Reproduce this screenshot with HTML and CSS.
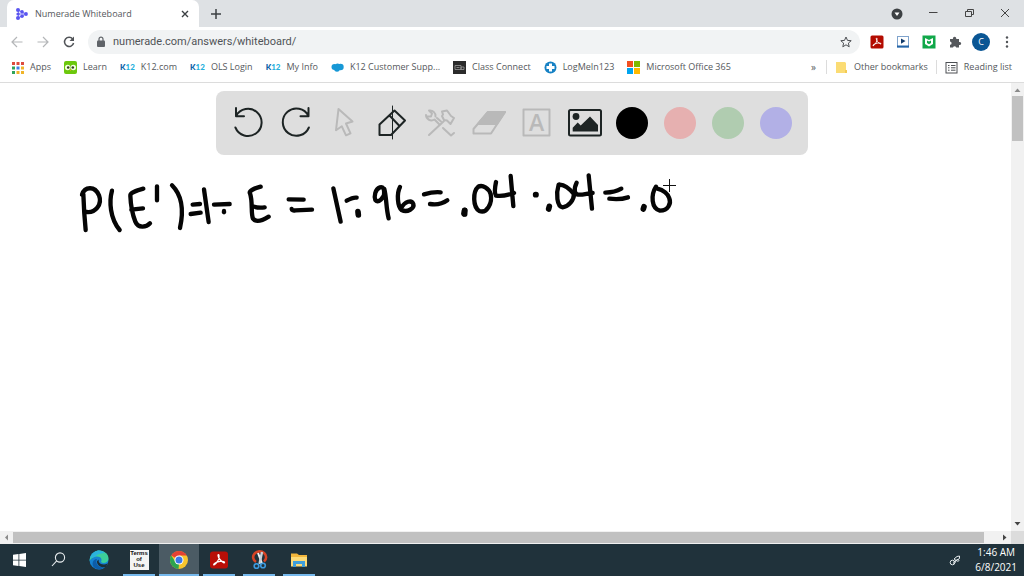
FILE: index.html
```html
<!DOCTYPE html>
<html lang="en">
<head>
<meta charset="utf-8">
<title>Numerade Whiteboard</title>
<link rel="stylesheet" href="styles.css">
</head>
<body>
<header class="browser">
  <div class="tabstrip">
    <div class="tab">
      <svg class="tab-icon" viewBox="0 0 12 12" fill="#5a55f0"><path d="M2 2L10 6L2 10L3 6ZM2 6H10" stroke="#7d78f4" fill="none"/><circle cx="2" cy="2" r="2"/><circle cx="2" cy="6" r="1.600"/><circle cx="2" cy="10" r="2"/><circle cx="6" cy="3.800" r="1.800"/><circle cx="6" cy="8.200" r="1.800"/><circle cx="10" cy="6" r="1.900"/></svg>
      <span class="tab-title">Numerade Whiteboard</span>
      <button class="plain" aria-label="Close tab"><svg class="i12" viewBox="0 0 12 12"><path d="M3 3L9 9M9 3L3 9" stroke="#3c4043" stroke-width="1.400"/></svg></button>
    </div>
    <button class="plain new-tab" aria-label="New tab"><svg class="i12" viewBox="0 0 12 12"><path d="M6 1V11M1 6H11" stroke="#3c4043" stroke-width="1.500"/></svg></button>
    <div class="window-controls">
      <button class="plain" aria-label="Tab search"><svg class="i12" viewBox="0 0 12 12"><circle cx="6" cy="6" r="5.500" fill="#3c4043"/><path d="M3.500 4.500H8.500L6 8Z" fill="#fff"/></svg></button>
      <button class="plain" aria-label="Minimize"><svg class="i12" viewBox="0 0 12 12"><path d="M2 4.500H10.500" stroke="#444"/></svg></button>
      <button class="plain" aria-label="Restore"><svg class="i12" viewBox="0 0 12 12" fill="none" stroke="#444"><path d="M2.500 3.500H8.500V8.500H2.500ZM4.500 3V1.500H10.500V6.500H9"/></svg></button>
      <button class="plain" aria-label="Close"><svg class="i12" viewBox="0 0 12 12"><path d="M2 1L10 9M10 1L2 9" stroke="#444"/></svg></button>
    </div>
  </div>

  <div class="toolbar">
    <div class="nav">
      <button class="plain" aria-label="Back"><svg class="i12" viewBox="0 0 12 12" fill="none" stroke="#b4b6b8" stroke-width="1.200"><path d="M11.500 6H1M6 1L1 6L6 11"/></svg></button>
      <button class="plain" aria-label="Forward"><svg class="i12" viewBox="0 0 12 12" fill="none" stroke="#b4b6b8" stroke-width="1.200"><path d="M.5 6H11M6 1L11 6L6 11"/></svg></button>
      <button class="plain" aria-label="Reload"><svg class="i12" viewBox="0 0 12 12" fill="none" stroke="#505357" stroke-width="1.500"><path d="M9.700 3A4.600 4.600 0 1 0 10.600 7"/><path d="M11 .5V5H6.500Z" fill="#505357" stroke="none"/></svg></button>
    </div>
    <div class="omnibox">
      <svg class="lock" viewBox="0 0 10 12"><rect x="1" y="4.500" width="8" height="6.500" rx="1" fill="#5f6368"/><path d="M3 5V3.200A2 2 0 0 1 7 3.200V5" fill="none" stroke="#5f6368" stroke-width="1.200"/></svg>
      <input class="url" type="text" aria-label="Address" value="numerade.com/answers/whiteboard/">
      <button class="plain" aria-label="Bookmark this page"><svg class="i12" viewBox="0 0 12 12"><path d="M6 1L7.500 4.400L11.200 4.700L8.400 7.100L9.200 10.800L6 8.800L2.800 10.800L3.600 7.100L.8 4.700L4.500 4.400Z" fill="none" stroke="#4c4f53"/></svg></button>
    </div>
    <div class="extensions">
      <button class="plain" aria-label="Adobe Acrobat"><svg class="i14" viewBox="0 0 14 14"><rect x=".5" y=".5" width="13" height="13" rx="1.500" fill="#b30b00"/><path d="M3 11C5 10 7.500 6 7 3.500C6.500 2 5.500 4 7.500 6.500S11.500 9.500 11 8.500C10 7.500 6 8 3.500 9.500Z" fill="none" stroke="#fff" stroke-width=".9"/></svg></button>
      <button class="plain" aria-label="Video player"><svg class="i14" viewBox="0 0 14 14"><rect x="1.500" y="1.500" width="11" height="10.500" fill="#fff" stroke="#7fa3cc"/><path d="M1 11.500H13" stroke="#2465a8" stroke-width="2"/><path d="M5 3.500L9.500 6L5 8.700Z" fill="#123b6b"/></svg></button>
      <button class="plain" aria-label="McAfee"><svg class="i14" viewBox="0 0 14 14"><rect x=".5" y=".5" width="13" height="13" fill="#11a84a"/><path d="M3 3L7 5L11 3V9L7 11.500L3 9Z" fill="#fff"/><path d="M5 5.500L7 6.600L9 5.500V8L7 9.300L5 8Z" fill="#11a84a"/></svg></button>
      <button class="plain" aria-label="Extensions"><svg class="i14" viewBox="0 0 14 14" fill="#55585c"><path d="M2 4H5A1.700 1.700 0 1 1 8.200 4H11V7A1.600 1.600 0 1 1 11 10V12.500H8.200A1.700 1.700 0 0 0 5 12.500H2V9.800A1.600 1.600 0 0 0 2 6.600Z"/></svg></button>
      <button class="avatar" aria-label="Profile">C</button>
      <button class="plain" aria-label="Menu"><svg class="i14" viewBox="0 0 14 14" fill="#505357"><circle cx="7" cy="2.500" r="1.200"/><circle cx="7" cy="7" r="1.200"/><circle cx="7" cy="11.500" r="1.200"/></svg></button>
    </div>
  </div>

  <nav class="bookmarks" aria-label="Bookmarks">
    <a class="bookmark" href="#"><svg class="i13" viewBox="0 0 13 13"><path d="M1 1h3v3H1zM5.500 1h3v3h-3zM10 1h3v3h-3z" fill="#dd4b3e"/><path d="M1 5.500h3v3H1z" fill="#2fa35a"/><path d="M5.500 5.500h3v3h-3z" fill="#3f7ee8"/><path d="M10 5.500h3v3h-3z" fill="#f0b429"/><path d="M1 10h3v3H1z" fill="#2fa35a"/><path d="M5.500 10h3v3h-3zM10 10h3v3h-3z" fill="#f0b429"/></svg><span>Apps</span></a>
    <a class="bookmark" href="#"><svg class="i13" viewBox="0 0 13 13"><rect width="13" height="13" rx="2" fill="#6cc80c"/><circle cx="3.700" cy="6.500" r="2.700" fill="#f4ffe0"/><circle cx="9.300" cy="6.500" r="2.700" fill="#f4ffe0"/><circle cx="4.200" cy="6.500" r="1.300" fill="#34431c"/><circle cx="8.800" cy="6.500" r="1.300" fill="#34431c"/><path d="M5.500 8.500H7.500L6.500 10Z" fill="#f6a821"/></svg><span>Learn</span></a>
    <a class="bookmark" href="#"><b class="k12">K<i>12</i></b><span>K12.com</span></a>
    <a class="bookmark" href="#"><b class="k12">K<i>12</i></b><span>OLS Login</span></a>
    <a class="bookmark" href="#"><b class="k12">K<i>12</i></b><span>My Info</span></a>
    <a class="bookmark" href="#"><svg class="i13" viewBox="0 0 13 13" fill="#1798d6"><circle cx="3.500" cy="6" r="3"/><circle cx="6.500" cy="5" r="2.500"/><circle cx="9.500" cy="6" r="3.200"/><circle cx="6" cy="8" r="2.800"/></svg><span>K12 Customer Supp...</span></a>
    <a class="bookmark" href="#"><svg class="i13" viewBox="0 0 13 13"><rect width="13" height="13" fill="#2b2b2b"/><path d="M2 4.500H8V8.500H2ZM8 6H11V8.500H8ZM3.500 6.500H6.500" fill="none" stroke="#999" stroke-width=".8"/></svg><span>Class Connect</span></a>
    <a class="bookmark" href="#"><svg class="i13" viewBox="0 0 13 13"><circle cx="6.500" cy="6.500" r="6" fill="#1681c4"/><path d="M5 2.500H8V5H10.500V8H8V10.500H5V8H2.500V5H5Z" fill="#fff"/></svg><span>LogMeIn123</span></a>
    <a class="bookmark" href="#"><svg class="i13" viewBox="0 0 13 13"><path d="M0 0h6v6H0z" fill="#f25022"/><path d="M7 0h6v6H7z" fill="#7fba00"/><path d="M0 7h6v6H0z" fill="#00a4ef"/><path d="M7 7h6v6H7z" fill="#ffb900"/></svg><span>Microsoft Office 365</span></a>
    <div class="bookmarks-end">
      <button class="plain more" aria-label="More bookmarks">»</button>
      <a class="bookmark divided" href="#"><svg class="i13" viewBox="0 0 13 13"><path d="M1 1H10L11 2V12H1Z" fill="#fbdc74"/><path d="M10 9H12V12H10Z" fill="#f3cb55"/></svg><span>Other bookmarks</span></a>
      <a class="bookmark divided" href="#"><svg class="i13" viewBox="0 0 13 13" fill="none" stroke="#4c4f53"><rect x="1" y="1.500" width="11" height="10.500"/><path d="M3 4.500h1.500M3 6.800h1.500M3 9.200h1.500M6 4.500h4.500M6 6.800h4.500M6 9.200h4.500"/></svg><span>Reading list</span></a>
    </div>
  </nav>
</header>

<main class="viewport">
  <section class="board" aria-label="Whiteboard">
    <svg class="ink" viewBox="0 83 1024 180" role="img" aria-label="P(E')=1- E = 1-.96=.04·.04=.0">
      <g class="stroke">
        <g transform="translate(70 170) scale(.3333)">
          <path d="M40 72Q42 130 47 180M36 74C44 50 74 46 87 76C98 105 75 129 50 126"/>
          <path d="M126 62C117 95 120 145 149 180"/>
          <path d="M220 56C200 62 180 68 181 77C182 100 188 135 196 155C205 177 230 171 240 160M184 119L219 115"/>
          <path d="M261 49L261 91M306 46C335 75 342 120 330 174"/>
          <path d="M368 104L390 102M362 132L392 128M402 58L416 156M432 104L479 102"/>
          <path d="M462 123v4"/>
          <path d="M572 50C557 54 535 62 540 70C549 95 542 130 549 146C560 160 580 150 596 140M549 109Q565 115 584 112"/>
        </g>
        <g transform="translate(270 165) scale(.3333)">
          <path d="M56 103L101 104M65 132Q66 138 76 136L126 134M190 70L212 170M230 107Q250 96 260 98"/>
          <path d="M264 140L265 150" class="dot"/>
          <path d="M342 90C344 68 338 65 330 67C315 72 312 95 316 105C325 115 342 100 345 80M343 72C350 100 348 130 356 160"/>
          <path d="M390 66C380 85 382 124 395 135C412 144 434 130 430 117C425 104 405 108 393 130"/>
          <path d="M462 88Q490 80 512 82M480 117Q510 122 532 106"/>
          <path d="M584 137L584 147" class="dot"/>
        </g>
        <g transform="translate(450 160) scale(.3333)">
          <path d="M44 151L42 161M257 104h1M298 139L296 147M582 140L580 147" class="dot"/>
          <path d="M85 80C68 95 68 140 88 153C110 162 128 130 122 102C116 84 98 74 85 80"/>
          <path d="M138 66C133 90 133 100 138 107C155 110 175 105 192 99M182 48L190 138"/>
          <path d="M326 74C318 100 320 140 338 142C356 140 372 120 372 102C360 88 345 75 330 74"/>
          <path d="M380 68C370 90 374 102 384 104C400 105 415 99 428 99M416 46L426 146"/>
          <path d="M466 98Q495 97 514 86M478 116Q510 120 534 112"/>
          <path d="M618 80C602 105 604 145 630 152C655 152 664 130 658 115C655 102 640 90 622 86"/>
        </g>
      </g>
      <path class="cursor" d="M663 185.500H676M669.500 179V192"/>
    </svg>

    <div class="tools" role="toolbar" aria-label="Drawing tools">
      <button class="tool" aria-label="Undo"><svg viewBox="0 0 48 48"><path d="M12 9V17.300H20M12 17A13.600 13.600 0 1 1 11.400 28.500"/></svg></button>
      <button class="tool" aria-label="Redo"><svg viewBox="0 0 48 48"><path d="M36.500 9V17.300H28.500M36.500 17A13.600 13.600 0 1 0 36.900 28.500"/></svg></button>
      <button class="tool faded" aria-label="Select"><svg viewBox="0 0 48 48"><path d="M18.500 10L32.500 22.500L26 24.500L30.500 34.300L26 36.300L21.800 27.300L16 31.300Z"/></svg></button>
      <button class="tool" aria-label="Pen"><svg viewBox="0 0 48 48"><path d="M26.500 11.500L37 21.500L23 36H11.500V25.500ZM21.500 16.500L31.500 27"/><path d="M24.500 7V40" stroke-width="1"/></svg></button>
      <button class="tool faded" aria-label="Tools"><svg viewBox="0 0 48 48"><path d="M10 16A5.500 5.500 0 0 0 18.500 20.500L23 25M27 29L35 36.500L38 34M19.500 17.500A5.500 5.500 0 0 0 13 11.500L16 14.500L15 17.500L11.500 17.500M21 19L25 22.500"/><path d="M13 36L28 22M27 15.500L26 12.500L31 11.500L35 17L38 19L34.500 25L31 21.500L28 21L26 17Z"/></svg></button>
      <button class="tool faded" aria-label="Eraser"><svg viewBox="0 0 48 48"><path d="M24 13H41L27 34.500H9.500V30Z"/><path d="M24 13H41L33 25H14Z" fill="#b9b9b9"/></svg></button>
      <button class="tool faded" aria-label="Text"><svg viewBox="0 0 48 48"><rect x="11.500" y="10.500" width="26" height="26"/><text class="letter" x="24.500" y="32" text-anchor="middle">A</text></svg></button>
      <button class="tool" aria-label="Image"><svg viewBox="0 0 48 48"><rect x="9" y="11" width="32" height="25.500" rx="1.500"/><g fill="#1d2424" stroke="none"><circle cx="16" cy="17.500" r="3.400"/><path d="M12.700 32.500V28.700L17.700 23.500L20.700 26.500L30 17.500L38 26V32.500Z"/></g></svg></button>
      <button class="tool" aria-label="Black"><span class="swatch black"></span></button>
      <button class="tool" aria-label="Red"><span class="swatch red"></span></button>
      <button class="tool" aria-label="Green"><span class="swatch green"></span></button>
      <button class="tool" aria-label="Blue"><span class="swatch blue"></span></button>
    </div>
  </section>
  <div class="scroll-y" aria-hidden="true">
    <svg class="arrow" viewBox="0 0 13 13"><path d="M3.500 9L6.500 5.500L9.500 9Z" fill="#8a8a8a"/></svg>
    <div class="thumb-y"></div>
    <svg class="arrow last" viewBox="0 0 13 13"><path d="M3.500 4L6.500 7.500L9.500 4Z" fill="#444"/></svg>
  </div>
  <div class="scroll-x" aria-hidden="true">
    <svg class="arrow" viewBox="0 0 13 13"><path d="M8 3.500L5 6.500L8 9.500Z" fill="#8a8a8a"/></svg>
    <div class="thumb-x"></div>
    <svg class="arrow last" viewBox="0 0 13 13"><path d="M5 3.500L8.500 6.500L5 9.500Z" fill="#444"/></svg>
  </div>
  <div class="corner"></div>
</main>

<footer class="taskbar">
  <button class="task start" aria-label="Start"><svg class="i20" viewBox="0 0 20 20" fill="#fff"><path d="M3 4.800L8.500 4V9.700H3ZM9.300 3.900L16 3V9.700H9.300ZM3 10.500H8.500V16L3 15.200ZM9.300 10.500H16V17L9.300 16.100Z"/></svg></button>
  <button class="task" aria-label="Search"><svg class="i20" viewBox="0 0 20 20" fill="none" stroke="#e8ecee" stroke-width="1.100"><circle cx="11" cy="7.500" r="4.600"/><path d="M7.700 10.800L3 16"/></svg></button>
  <button class="task" aria-label="Edge"><svg class="i20" viewBox="0 0 20 20"><circle cx="10" cy="10" r="9.500" fill="#1683d2"/><path d="M1 8C3 2 8 .5 10 .5C16 .5 20 5 19.500 9C19 13 14 14 12 12C13.500 9.500 12 6.500 8 6.500C5 6.500 2 8 .5 11Z" fill="#3ccf9a"/><path d="M1 8C3 2 8 .5 10 .5C13 .5 15 2 16 3C12 3 8 4 6 7Z" fill="#2bb3dd"/><path d="M8 9C6 13 9 18 15 17.500C12 20.500 6 19.500 4 16C2.500 12 5 9 8 9Z" fill="#0d5ca8"/><path d="M10 9.500C9 11 10 14.500 15 14.500C17 14.500 18 13.500 19 13L17 17C12 18.500 7.500 15 8 11Z" fill="#1c2d37"/></svg></button>
  <button class="task open" aria-label="Terms of Use"><span class="terms">Terms<br>of<br>Use</span></button>
  <button class="task open active" aria-label="Chrome"><svg class="i20" viewBox="0 0 20 20"><circle cx="10" cy="10" r="9" fill="#f7c52d"/><path d="M17.800 5.500H10V10L2.200 5.500A9 9 0 0 1 17.800 5.500Z" fill="#e44134"/><path d="M2.200 5.500L6.500 12L10 14L9.500 19A9 9 0 0 1 2.200 5.500Z" fill="#2da44f"/><circle cx="10" cy="10" r="4.500" fill="#fff"/><circle cx="10" cy="10" r="3.500" fill="#3b78e7"/></svg></button>
  <button class="task open" aria-label="Acrobat"><svg class="i20" viewBox="0 0 20 20"><rect x="1" y="1.500" width="18" height="17" rx="3" fill="#b90f08"/><path d="M5 15C8 13.500 11 8 10 5C9 3.500 8 6 11 9.500S16 13.500 15.500 12C14.500 10.500 8 11.500 5.500 13.500C4.500 14.500 4.500 15 5 15Z" fill="none" stroke="#fff" stroke-width="1.200"/></svg></button>
  <button class="task open" aria-label="Snipping Tool"><svg class="i20" viewBox="0 0 20 20" fill="none"><path d="M7 12A6.500 5.800 0 1 1 15 11.500" stroke="#d64425" stroke-width="2.600"/><path d="M9 3L13 13.500" stroke="#f2f4f5" stroke-width="2"/><path d="M13 2L10.500 14" stroke="#c9d2d8" stroke-width="2.400"/><circle cx="7.500" cy="16" r="2.300" stroke="#3c9be0" stroke-width="1.600"/><circle cx="14" cy="15.500" r="2.300" stroke="#3c9be0" stroke-width="1.600"/></svg></button>
  <button class="task open" aria-label="File Explorer"><svg class="i20" viewBox="0 0 20 20"><path d="M2 3.500H8L10 5H18V16H2Z" fill="#f2b63c"/><path d="M2 7H18V16.500H2Z" fill="#fddb78"/><path d="M4 11H16V17H13V14H7V17H4Z" fill="#3f9fdc"/></svg></button>
  <div class="tray">
    <svg class="i12" viewBox="0 0 12 12" fill="none" stroke="#e4eaec"><circle cx="3.500" cy="8.500" r="2.300"/><path d="M4 10C7 10 6 5 9 5.500C11 6 9.500 8 8 7L5 5L8 2.500L10.500 2V4.500L4 8.500"/></svg>
    <div class="clock"><span>1:46 AM</span><span>6/8/2021</span></div>
  </div>
</footer>
</body>
</html>
```
FILE: styles.css
```css
* { box-sizing: border-box; }
body {
  margin: 0;
  height: 100vh;
  display: flex;
  flex-direction: column;
  overflow: hidden;
  background: #fff;
  color: #55585c;
  font: 9px/14px "Open Sans", "Noto Sans", sans-serif;
}
button { font: inherit; color: inherit; cursor: pointer; }
svg { display: block; flex: none; }
.i12 { width: 12px; height: 12px; }
.i13 { width: 13px; height: 13px; }
.i14 { width: 14px; height: 14px; }
.i20 { width: 20px; height: 20px; }
.plain { display: flex; padding: 0; border: 0; background: none; }

/* Tab strip */
.tabstrip {
  display: flex;
  align-items: center;
  height: 27px;
  padding-left: 7px;
  background: #dee1e4;
}
.tab {
  display: flex;
  align-items: center;
  gap: 7px;
  width: 192px;
  height: 27px;
  padding: 0 8px 0 9px;
  border-radius: 7px 7px 0 0;
  background: #fff;
}
.tab-icon { width: 12px; height: 12px; }
.tab-title { flex: 1; white-space: nowrap; }
.new-tab { margin-left: 11px; }
.window-controls { display: flex; gap: 24px; margin-left: auto; padding-right: 13px; }

/* Address row */
.toolbar { display: flex; align-items: center; height: 29px; padding: 0 10px 0 11px; }
.nav { display: flex; gap: 14px; margin-right: 13px; }
.omnibox {
  display: flex;
  align-items: center;
  gap: 7px;
  flex: 1;
  height: 24px;
  padding: 0 8px;
  border-radius: 12px;
  background: #f1f3f4;
}
.lock { width: 10px; height: 12px; }
.url {
  flex: 1;
  min-width: 0;
  padding: 0;
  border: 0;
  outline: 0;
  background: none;
  color: #505357;
  font: 11px/16px Roboto, "Open Sans", sans-serif;
}
.extensions { display: flex; align-items: center; gap: 12px; margin-left: 10px; }
.avatar {
  width: 18px;
  height: 18px;
  margin: 0 -2px;
  padding: 0;
  border: 0;
  border-radius: 50%;
  background: #0a5694;
  color: #fff;
}

/* Bookmarks */
.bookmarks {
  display: flex;
  align-items: center;
  gap: 13px;
  height: 27px;
  padding: 0 12px 4px 11px;
  border-bottom: 1px solid #dcdcdc;
  white-space: nowrap;
}
.bookmark { display: flex; align-items: center; gap: 6px; color: inherit; text-decoration: none; }
.k12 { color: #0a5fa8; font: 900 8px/14px Lato, sans-serif; }
.k12 i { color: #27b0dc; font-style: normal; }
.bookmarks-end { display: flex; align-items: center; gap: 8px; margin-left: auto; }
.more { margin-right: 2px; font-size: 10px; }
.divided { padding-left: 8px; border-left: 1px solid #dcdcdc; }

/* Page viewport with its scrollbars */
.viewport {
  flex: 1;
  min-height: 0;
  display: grid;
  grid-template: minmax(0, 1fr) 13px / minmax(0, 1fr) 13px;
}
.board { position: relative; margin-right: -13px; padding-top: 8px; overflow: hidden; }
.ink { position: absolute; left: 0; top: 0; width: 1024px; height: 180px; }
.stroke { fill: none; stroke: #050505; stroke-width: 13; stroke-linecap: round; stroke-linejoin: round; }
.dot { stroke-width: 17; }
.cursor { stroke: #111; stroke-width: 1; }
.tools {
  position: relative;
  display: flex;
  width: fit-content;
  margin: 0 auto;
  padding: 8px;
  border-radius: 8px;
  background: #dedede;
}
.tool {
  display: grid;
  place-items: center;
  width: 48px;
  height: 48px;
  padding: 0;
  border: 0;
  background: none;
}
.tool svg { width: 48px; height: 48px; fill: none; stroke: #1d2424; stroke-width: 2; stroke-linecap: round; stroke-linejoin: round; }
.tool.faded svg { stroke: #b9b9b9; }
.tool .letter { fill: #b9b9b9; stroke: none; font: 600 23px "Open Sans", sans-serif; }
.swatch { width: 32px; height: 32px; border-radius: 50%; }
.black { background: #000; }
.red { background: #e6b0b0; }
.green { background: #b0ccb0; }
.blue { background: #b2b0e6; }

.scroll-y { position: relative; display: flex; flex-direction: column; background: #f1f1f1; }
.scroll-x { display: flex; background: #f1f1f1; }
.arrow { width: 13px; height: 13px; }
.scroll-y .last { margin-top: auto; }
.scroll-x .last { margin-left: auto; }
.thumb-y { height: 10%; margin: 0 1px; background: #c1c1c1; }
.thumb-x { width: 96%; margin: 1px 0; background: #c1c1c1; }
.corner { background: #dcdcdc; }

/* Taskbar */
.taskbar {
  display: flex;
  height: 32px;
  background: #20323b;
  color: #fff;
}
.task {
  position: relative;
  display: grid;
  place-items: center;
  width: 40px;
  padding: 0;
  border: 0;
  background: none;
}
.start { width: 39px; }
.active { background: #4b5b64; }
.open::after {
  content: "";
  position: absolute;
  left: 4px;
  right: 4px;
  bottom: 0;
  height: 2px;
  background: #76b9ed;
}
.active::after { left: 0; right: 0; }
.terms {
  width: 19px;
  height: 20px;
  background: #f4f4f4;
  color: #111;
  font: bold 6px/6px "Liberation Sans", sans-serif;
}
.tray { display: flex; align-items: center; gap: 14px; margin-left: auto; padding-right: 7px; }
.clock { display: flex; flex-direction: column; align-items: center; font-size: 10px; line-height: 15px; }
```
